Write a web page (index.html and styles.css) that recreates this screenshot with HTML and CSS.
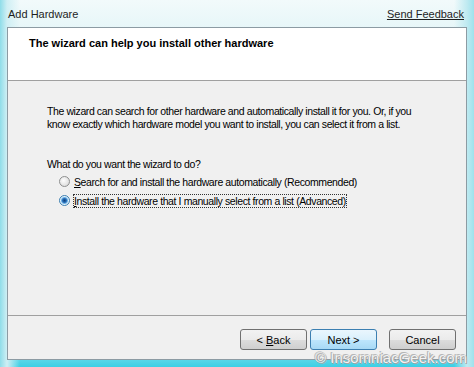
FILE: index.html
```html
<!DOCTYPE html>
<html lang="en">
<head>
  <meta charset="UTF-8" />
  <title>Add Hardware</title>
  <link rel="stylesheet" href="styles.css">
</head>
<body>
  <div class="window">
    <!-- Barra de titulo -->
    <div class="titlebar">
      <span class="title">Add Hardware</span>
      <a class="feedback" href="#">Send Feedback</a>
    </div>

    <!-- Area del asistente -->
    <div class="client">
      <div class="header">
        <h1>The wizard can help you install other hardware</h1>
      </div>

      <div class="body">
        <p class="intro">The wizard can search for other hardware and automatically install it for you. Or, if you know exactly which hardware model you want to install, you can select it from a list.</p>
        <p class="question">What do you want the wizard to do?</p>
        <ul class="options">
          <li><span class="radio"></span><span><u>S</u>earch for and install the hardware automatically (Recommended)</span></li>
          <li><span class="radio checked"></span><span class="focus"><u>I</u>nstall the hardware that I manually select from a list (Advanced)</span></li>
        </ul>
      </div>

      <div class="footer">
        <button class="btn">&lt; <u>B</u>ack</button>
        <button class="btn default">Next &gt;</button>
        <button class="btn cancel">Cancel</button>
      </div>
    </div>

    <div class="watermark">© InsomniacGeek.com</div>
  </div>
</body>
</html>
```

FILE: styles.css
```css
/* Ventana */
body {
  margin: 0;
  font-family: "Liberation Sans", Arial, sans-serif;
  font-size: 11px;
  color: #000;
}

.window {
  position: relative;
  width: 474px;
  height: 367px;
  box-sizing: border-box;
  padding: 0 7px 7px 7px;
  display: flex;
  flex-direction: column;
  background:
    linear-gradient(to right, #8fdde9 0, #cfeff4 7px, rgba(255,255,255,0) 20px, rgba(255,255,255,0) 454px, #bfeaf1 467px, #9ee2ec 474px),
    linear-gradient(to bottom, #f2fafb 0, #e6f6f8 30px, #d6f1f5 300px, #58d6e8 360px, #3ccfe4 367px);
}

.titlebar {
  height: 27px;
  display: flex;
  align-items: center;
  justify-content: space-between;
  padding: 0 3px 0 1px;
  color: #1e1e1e;
}

.feedback {
  color: #1e1e1e;
  text-decoration: underline;
}

/* Contenido */
.client {
  flex: 1;
  display: flex;
  flex-direction: column;
  border: 1px solid #8c9ba3;
  background-color: #f0f0f0;
}

.header {
  height: 53px;
  background-color: #fff;
  border-bottom: 1px solid #a0a0a0;
  padding: 8px 0 0 21px;
  box-sizing: border-box;
}

.header h1 {
  margin: 0;
  font-size: 11px;
  font-weight: bold;
  line-height: 14px;
}

.body {
  flex: 1;
  padding: 24px 30px 0 39px;
  border-bottom: 1px solid #a0a0a0;
  font-size: 10.5px;
  letter-spacing: -0.4px;
}

.intro {
  margin: 0;
  line-height: 13px;
}

.question {
  margin: 26px 0 0 0;
  line-height: 14px;
}

.options {
  list-style: none;
  margin: 1px 0 0 12px;
  padding: 0;
}

.options li {
  display: flex;
  align-items: center;
  gap: 4px;
  height: 19px;
}

.radio {
  width: 11px;
  height: 11px;
  border-radius: 50%;
  border: 1px solid #8e8f8f;
  background: radial-gradient(circle at 40% 40%, #fdfdfd 0, #e0e0e0 70%, #cfcfcf 100%);
  box-sizing: border-box;
  flex: none;
}

.radio.checked {
  border-color: #3c7fb1;
  background: radial-gradient(circle, #0a3e7c 0, #2a6db5 2px, #6ab0e6 3px, #e4f2fb 4px, #f5fafd 100%);
}

.focus {
  outline: 1px dotted #333;
  outline-offset: 0;
}

/* Botones */
.footer {
  height: 43px;
  display: flex;
  align-items: center;
  padding: 4px 10px 0 0;
  box-sizing: border-box;
  justify-content: flex-end;
}

.btn {
  width: 67px;
  height: 21px;
  margin-left: 3px;
  padding: 0;
  font-family: "Liberation Sans", Arial, sans-serif;
  font-size: 11px;
  color: #000;
  border: 1px solid #707070;
  border-radius: 3px;
  background: linear-gradient(to bottom, #f2f2f2 0, #ebebeb 50%, #dddddd 51%, #cfcfcf 100%);
}

.btn.default {
  border-color: #3c7fb1;
  background: linear-gradient(to bottom, #eaf6fd 0, #d9f0fc 50%, #bee6fd 51%, #a7d9f5 100%);
}

.btn.cancel {
  margin-left: 12px;
}

.watermark {
  position: absolute;
  right: 7px;
  bottom: 0;
  font-family: "Liberation Sans", Arial, sans-serif;
  font-size: 15px;
  line-height: 18px;
  color: #f4f4f4;
  text-shadow: 0 0 1px #888, 1px 1px 0 #aaa, -1px -1px 0 #bbb;
}
```
